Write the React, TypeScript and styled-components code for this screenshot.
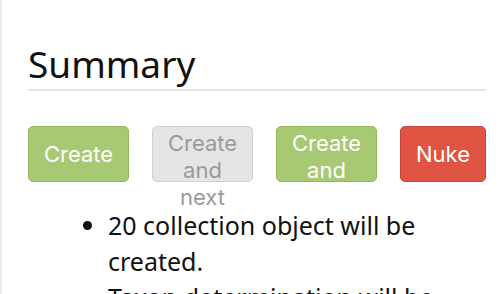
import React from "react";
import styled, { createGlobalStyle } from "styled-components";

const GlobalStyle = createGlobalStyle`
  html, body {
    margin: 0;
    padding: 0;
    background: #ffffff;
  }
  body {
    font-family: "Noto Sans", "Open Sans", sans-serif;
    color: #111111;
  }
`;

const Panel = styled.div`
  width: 500px;
  height: 294px;
  box-sizing: border-box;
  border-left: 2px solid #ececec;
  padding: 40px 14px 0 26px;
  overflow: hidden;
`;

const Title = styled.h2`
  margin: 0;
  font-size: 37px;
  font-weight: 400;
  line-height: 48px;
  padding-bottom: 1px;
  border-bottom: 2px solid #e4e4e4;
`;

const Actions = styled.div`
  display: flex;
  justify-content: space-between;
  margin-top: 35px;
  height: 56px;
`;

const tones = {
  green: { bg: "#a8c973", border: "#94b760", text: "#ffffff" },
  grey: { bg: "#e5e5e5", border: "#d0d0d0", text: "#9a9a9a" },
  red: { bg: "#e15443", border: "#c9463a", text: "#ffffff" },
};

type Tone = keyof typeof tones;

const ActionButton = styled.div<{ $tone: Tone; $w: number }>`
  box-sizing: border-box;
  width: ${(p) => p.$w}px;
  height: 56px;
  padding: 3px 8px;
  display: flex;
  align-items: safe center;
  justify-content: center;
  text-align: center;
  border-radius: 5px;
  border: 1px solid ${(p) => tones[p.$tone].border};
  background: ${(p) => tones[p.$tone].bg};
  color: ${(p) => tones[p.$tone].text};
  font-family: Inter, "Liberation Sans", sans-serif;
  font-size: 22px;
  line-height: 27px;
  cursor: pointer;
`;

const Notes = styled.ul`
  margin: 25px 0 0;
  padding-left: 80px;
  font-size: 25px;
  line-height: 36px;
`;

export default function App() {
  return (
    <>
      <GlobalStyle />
      <Panel>
        <Title>Summary</Title>
        <Actions>
          <ActionButton $tone="green" $w={101}>Create</ActionButton>
          <ActionButton $tone="grey" $w={101}>Create and next</ActionButton>
          <ActionButton $tone="green" $w={101}>Create and copy</ActionButton>
          <ActionButton $tone="red" $w={86}>Nuke</ActionButton>
        </Actions>
        <Notes>
          <li>
            20 collection object will be created.
            <br />
            Taxon determination will be added.
          </li>
        </Notes>
      </Panel>
    </>
  );
}
